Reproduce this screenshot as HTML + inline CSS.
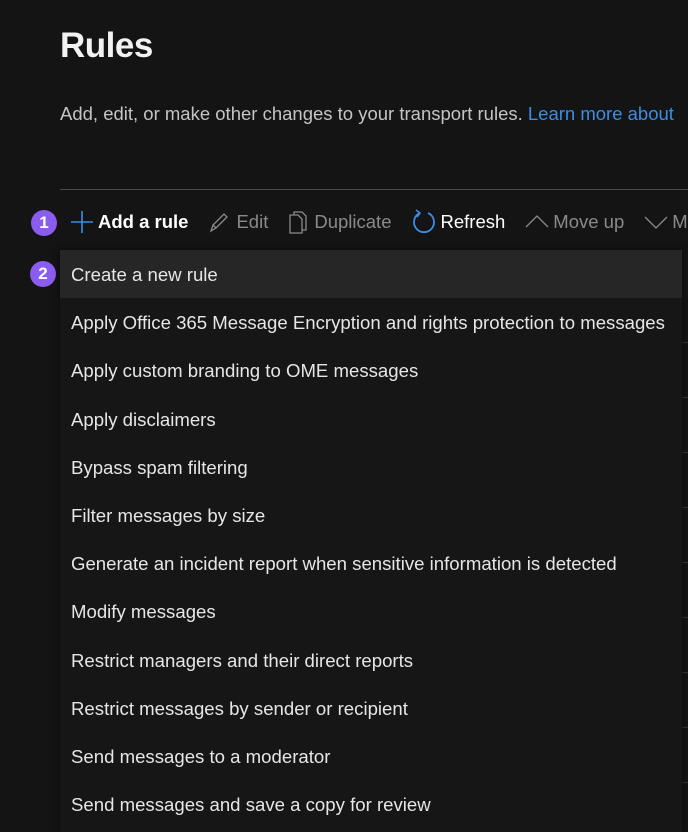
<!DOCTYPE html>
<html><head><meta charset="utf-8"><style>
html,body{overflow:hidden}
body{margin:0;width:688px;height:832px;background:#141414;position:relative;font-family:"Liberation Sans",sans-serif;color:#e8e8e8}
.t{position:absolute;left:60px;top:26px;font-size:35px;font-weight:bold;color:#f2f2f2;letter-spacing:-0.5px}
.d{position:absolute;left:60px;top:103px;font-size:18.5px;color:#c4c4c4;white-space:nowrap}
.d a{color:#3a8ee6;text-decoration:none}
.hr{position:absolute;left:60px;top:189px;width:628px;height:1px;background:#4a4a4a}
.tb{position:absolute;top:207px;left:70px;height:30px;display:flex;align-items:center;font-size:18.5px;white-space:nowrap}
.tb span{display:flex;align-items:center;margin-right:20px}
.g{color:#8a8a8a}
.b{position:absolute;width:26px;height:26px;border-radius:50%;background:#8a5cf0;color:#fff;font-weight:bold;font-size:17px;display:flex;align-items:center;justify-content:center}
.m{position:absolute;left:60px;top:250px;width:622px;height:582px;background:#161616;box-shadow:0 0 6px rgba(0,0,0,.6)}
.r{height:48.2px;line-height:50px;padding-left:11px;font-size:18.6px;color:#e6e6e6;white-space:nowrap}
.r:first-child{background:#262626}
.rt{position:absolute;left:682px;width:6px;height:1px;background:#333}
</style></head><body>
<div class="t">Rules</div>
<div class="d">Add, edit, or make other changes to your transport rules. <a>Learn more about</a></div>
<div class="hr"></div>
<div class="b" style="left:31px;top:210px">1</div>
<div class="b" style="left:30px;top:261px">2</div>
<div class="tb">
<span style="font-weight:bold;color:#fff"><svg width="24" height="24" style="margin-right:4px"><path d="M12 1v22M1 12h22" stroke="#3a8ee6" stroke-width="1.6"/></svg>Add a rule</span>
<span class="g"><svg width="22" height="22" style="margin-right:6px"><path d="M3 20l2-6L16 3l3 3L8 17zM5 14l3 3" stroke="#8a8a8a" fill="none" stroke-width="1.3"/></svg>Edit</span>
<span class="g"><svg width="20" height="24" style="margin-right:6px"><path d="M6 5V2h8l4 4v14h-4M2 5h8l4 4v14H2z" stroke="#8a8a8a" fill="none" stroke-width="1.3"/></svg>Duplicate</span>
<span style="color:#fff"><svg width="24" height="26" style="margin-right:5px"><path d="M8 4A10 10 0 1 0 16 4" stroke="#3a8ee6" fill="none" stroke-width="1.8"/><path d="M4 1l4 3-3 4" stroke="#3a8ee6" fill="none" stroke-width="1.6"/></svg>Refresh</span>
<span class="g"><svg width="24" height="20" style="margin-right:4px"><path d="M1 15L12 4l11 11" stroke="#8a8a8a" fill="none" stroke-width="1.3"/></svg>Move up</span>
<span class="g"><svg width="24" height="20" style="margin-right:4px"><path d="M1 5l11 11L23 5" stroke="#8a8a8a" fill="none" stroke-width="1.3"/></svg>Mo</span>
</div>
<div class="rt" style="top:342px"></div><div class="rt" style="top:397px"></div><div class="rt" style="top:452px"></div><div class="rt" style="top:507px"></div><div class="rt" style="top:562px"></div><div class="rt" style="top:617px"></div><div class="rt" style="top:672px"></div><div class="rt" style="top:727px"></div><div class="rt" style="top:782px"></div>
<div style="position:absolute;left:140px;top:818px;font-size:17px;color:#888">Disabled</div>
<div style="position:absolute;left:500px;top:818px;font-size:17px;color:#888">Workshop Safelist</div>
<div class="m">
<div class="r">Create a new rule</div>
<div class="r">Apply Office 365 Message Encryption and rights protection to messages</div>
<div class="r">Apply custom branding to OME messages</div>
<div class="r">Apply disclaimers</div>
<div class="r">Bypass spam filtering</div>
<div class="r">Filter messages by size</div>
<div class="r">Generate an incident report when sensitive information is detected</div>
<div class="r">Modify messages</div>
<div class="r">Restrict managers and their direct reports</div>
<div class="r">Restrict messages by sender or recipient</div>
<div class="r">Send messages to a moderator</div>
<div class="r">Send messages and save a copy for review</div>
</div>
</body></html>
